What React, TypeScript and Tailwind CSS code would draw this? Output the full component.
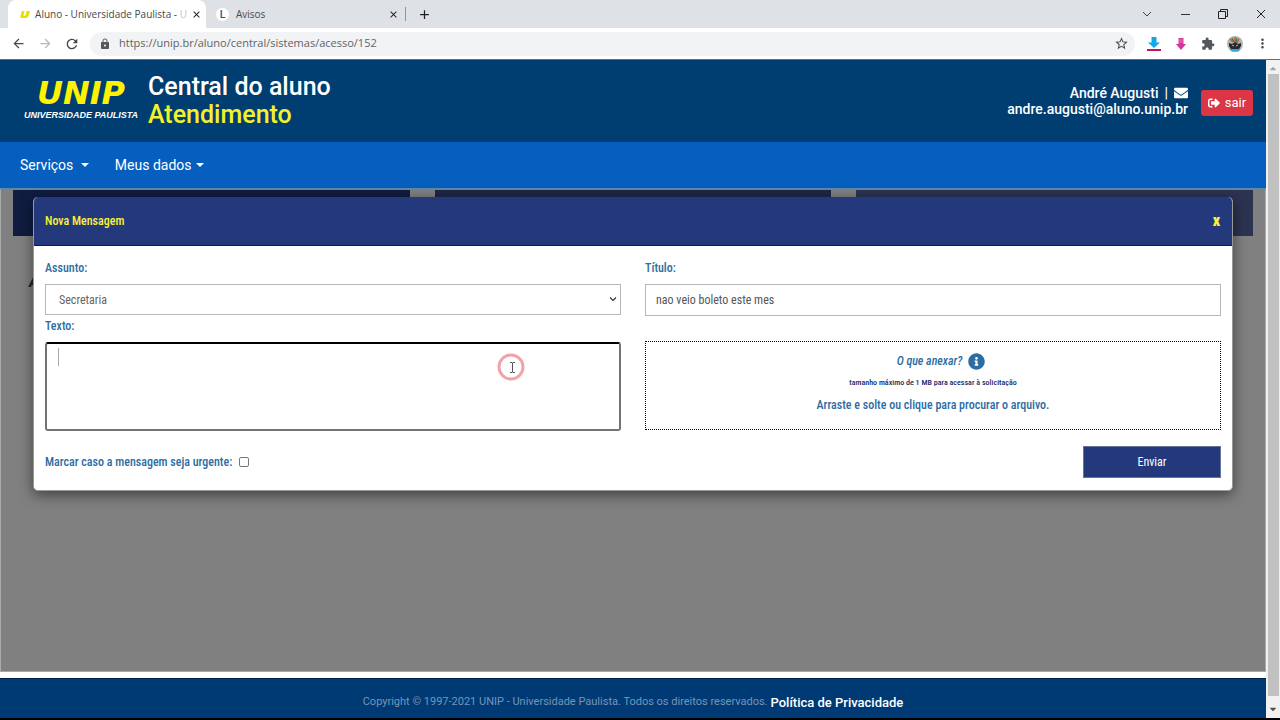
import type { ReactNode } from "react";
import { FaCaretDown, FaEnvelope, FaInfoCircle, FaSignOutAlt } from "react-icons/fa";
import {
  MdArrowBack,
  MdArrowForward,
  MdClose,
  MdExtension,
  MdLock,
  MdMoreVert,
  MdRefresh,
  MdStarBorder,
  MdAdd,
} from "react-icons/md";

function IconButton({ label, children }: { label: string; children: ReactNode }) {
  return (
    <button type="button" aria-label={label} className="flex h-5 w-5 shrink-0 items-center justify-center">
      {children}
    </button>
  );
}

function UnipMark() {
  return (
    <svg viewBox="0 0 12 10" className="h-[9px] w-3 shrink-0" aria-hidden="true">
      <path d="M2.5 1h3L4.3 6.5h2L7.8 1h3.7L9.8 7Q9.3 9 7 9H2.2Q.3 9 .8 7z" fill="#e6e000" />
    </svg>
  );
}

function TabStrip() {
  return (
    <div className="flex h-7 items-stretch bg-[#dee1e6] text-[10px] text-[#45494d]">
      <div className="ml-2 flex w-[198px] items-center justify-between rounded-t-lg bg-white pl-[11px] pr-1">
        <UnipMark />
        <span className="whitespace-nowrap">
          Aluno - Universidade Paulista - <span className="text-[#c4c6c8]">U</span>
        </span>
        <button type="button" aria-label="Fechar aba Aluno">
          <MdClose size={11} color="#202124" />
        </button>
      </div>
      <div className="flex w-[202px] items-center pl-[10px] pr-[5px]">
        <span className="flex h-[13px] w-[13px] items-center justify-center rounded-full bg-white text-[11px] font-semibold text-[#1d5686]">
          L
        </span>
        <span className="ml-[7px] flex-1">Avisos</span>
        <IconButton label="Fechar aba Avisos">
          <MdClose size={11} color="#202124" />
        </IconButton>
      </div>
      <span className="my-[7px] -ml-[3px] w-px bg-[#909498]" />
      <div className="ml-2 flex items-center">
        <IconButton label="Nova aba">
          <MdAdd size={15} color="#202124" />
        </IconButton>
      </div>
      <div className="ml-auto flex items-center gap-[18px] pr-[9px]">
        <IconButton label="Pesquisar abas">
          <svg viewBox="0 0 10 6" className="h-[6px] w-[10px]" fill="none" stroke="#444">
            <path d="M1 1l4 4 4-4" />
          </svg>
        </IconButton>
        <IconButton label="Minimizar">
          <span className="h-px w-[9px] bg-[#333]" />
        </IconButton>
        <IconButton label="Restaurar">
          <svg viewBox="0 0 10 10" className="h-[10px] w-[10px]" fill="none" stroke="#222">
            <path d="M.5 2.5h7v7h-7zM2.5 2.5v-2h7v7h-2" />
          </svg>
        </IconButton>
        <IconButton label="Fechar">
          <svg viewBox="0 0 10 10" className="h-[10px] w-[10px]" fill="none" stroke="#222">
            <path d="M1 1l8 8M9 1L1 9" />
          </svg>
        </IconButton>
      </div>
    </div>
  );
}

function Toolbar() {
  return (
    <div className="flex h-8 items-center border-b border-[#4b7899] bg-white px-2">
      <div className="flex gap-[7px]">
        <IconButton label="Voltar">
          <MdArrowBack size={15} color="#45494d" />
        </IconButton>
        <IconButton label="Avançar">
          <MdArrowForward size={15} color="#b5b8bb" />
        </IconButton>
        <IconButton label="Recarregar">
          <MdRefresh size={16} color="#45494d" />
        </IconButton>
      </div>
      <div className="ml-[8px] flex h-6 flex-1 items-center rounded-full bg-[#f1f3f4] pl-[9px] pr-1">
        <MdLock size={12} color="#55595d" />
        <input
          aria-label="Endereço"
          readOnly
          value="https://unip.br/aluno/central/sistemas/acesso/152"
          className="ml-2 min-w-0 flex-1 bg-transparent text-[11px] text-[#5f6368] outline-none"
        />
        <IconButton label="Favoritar">
          <MdStarBorder size={15} color="#45494d" />
        </IconButton>
      </div>
      <div className="ml-[9px] flex items-center gap-[7px]">
        <IconButton label="Downloads">
          <svg viewBox="0 0 14 14" className="h-[14px] w-[14px]">
            <path d="M4.5 0h5v5.5H13L7 11 1 5.500h3.500z" fill="#10a8e8" />
            <path d="M0 12h14v2H0z" fill="#c2185b" />
          </svg>
        </IconButton>
        <IconButton label="Baixar vídeo">
          <svg viewBox="0 0 10 12" className="h-3 w-[10px]">
            <path d="M2.500 0h5v6H10L5 12 0 6h2.500z" fill="#d9349a" />
            <path d="M2.500 2h5M2.500 4h5" stroke="#f3a6d3" strokeWidth=".6" />
          </svg>
        </IconButton>
        <IconButton label="Extensões">
          <MdExtension size={14} color="#54585c" />
        </IconButton>
        <IconButton label="Perfil">
          <svg viewBox="0 0 16 16" className="h-4 w-4">
            <circle cx="8" cy="8" r="8" fill="#a9b6b4" />
            <path d="M3 3l3 3M8 1v5M12 3l-2 4" stroke="#c55f2e" strokeWidth="1.600" />
            <path d="M5 2l2 4M10 2l-1 5" stroke="#3f7048" strokeWidth="1.200" />
            <path d="M2 7l3 1 3-2 3 2 3-1v3l-2 3H4l-2-3z" fill="#29282a" />
            <path d="M5 9l2 1M11 9l-2 1" stroke="#d4b18d" />
            <path d="M3 13h10v1l-2 1.500H5L3 14z" fill="#35a6df" />
          </svg>
        </IconButton>
        <IconButton label="Menu">
          <MdMoreVert size={15} color="#45494d" />
        </IconButton>
      </div>
    </div>
  );
}

function SiteHeader() {
  return (
    <header className="flex h-[82px] items-center bg-[#003e71] pl-[25px] pr-[13px] text-white">
      <a href="#inicio" className="flex w-28 flex-col items-center">
        <span className="font-['DejaVu_Sans'] text-[32px] font-bold italic leading-6 text-[#fff200]">UNIP</span>
        <span className="mt-1 whitespace-nowrap font-['Liberation_Sans'] text-[9px] font-bold italic leading-3">
          UNIVERSIDADE PAULISTA
        </span>
      </a>
      <h1 className="ml-[11px] text-[25px] font-medium leading-7">
        Central do aluno
        <span className="block text-[#f4f12c]">Atendimento</span>
      </h1>
      <div className="ml-auto text-right text-sm font-medium leading-4">
        <div className="flex items-center justify-end gap-[6px]">
          <span>André Augusti</span>
          <span>|</span>
          <FaEnvelope size={14} />
        </div>
        <div>andre.augusti@aluno.unip.br</div>
      </div>
      <button
        type="button"
        className="ml-[13px] mt-1 flex h-[26px] w-[52px] items-center justify-center gap-[5px] rounded-[3px] bg-[#dc3545] text-[13px]"
      >
        <FaSignOutAlt size={12} />
        sair
      </button>
    </header>
  );
}

function Field({ label, id, children }: { label: string; id: string; children: ReactNode }) {
  return (
    <div>
      <label htmlFor={id} className="block h-[26px] font-medium leading-5 text-[#2d6ca2]">
        {label}
      </label>
      {children}
    </div>
  );
}

function MessageDialog() {
  return (
    <section
      role="dialog"
      aria-labelledby="dialog-title"
      className="absolute inset-x-8 top-[7px] overflow-hidden rounded-[5px] border border-[#999] border-t-0 bg-white font-['Roboto_Condensed',sans-serif] text-[12px] shadow-[0_4px_14px_rgba(0,0,0,0.5)]"
    >
      <header className="flex h-[49px] items-center justify-between border-b border-[#071c55] bg-[#24397b] pl-[11px] pr-3 text-[#fbf136]">
        <h2 id="dialog-title" className="font-medium">
          Nova Mensagem
        </h2>
        <button type="button" aria-label="Fechar" className="text-base font-black">
          x
        </button>
      </header>
      <form className="px-[11px] py-3" onSubmit={(event) => event.preventDefault()}>
        <div className="grid grid-cols-2 gap-x-6">
          <Field label="Assunto:" id="assunto">
            <div className="relative">
              <select
                id="assunto"
                className="block h-[31px] w-full appearance-none border border-[#b5b8ba] bg-white pl-[13px] text-[#666]"
              >
                <option>Secretaria</option>
              </select>
              <svg
                viewBox="0 0 8 5"
                className="pointer-events-none absolute right-1 top-[13px] h-[5px] w-2"
                fill="none"
                stroke="#333"
                strokeWidth="1.200"
              >
                <path d="M1 .5l3 3 3-3" />
              </svg>
            </div>
          </Field>
          <Field label="Título:" id="titulo">
            <input
              id="titulo"
              defaultValue="nao veio boleto este mes"
              className="block h-8 w-full border border-[#b5b8ba] px-[10px] text-[#555]"
            />
          </Field>
          <div className="relative">
            <Field label="Texto:" id="texto">
              <textarea
                id="texto"
                className="block h-[89px] w-full resize-none rounded-[3px] border-2 border-[#737373] border-t-black px-3 py-1"
              />
            </Field>
            <span className="absolute left-[13px] top-8 h-[18px] w-px bg-[#aaa]" />
            <svg viewBox="0 0 28 28" className="absolute left-[452px] top-[37px] h-7 w-7" fill="none">
              <circle cx="14" cy="14" r="12" stroke="#f2a3a6" strokeWidth="3" />
              <path d="M13 9.500h2l.5.500.5-.5h2M13 19.500h2l.5-.5.5.5h2M15.500 10v9" stroke="#555" />
            </svg>
          </div>
          <div className="pt-[25px]">
            <button
              type="button"
              className="flex h-[89px] w-full flex-col items-center border border-dotted border-black pt-[9px] font-medium text-[#2d6ca2]"
            >
              <span className="flex h-5 items-center gap-[6px] pl-4 italic">
                O que anexar?
                <FaInfoCircle size={17} />
              </span>
              <span className="mt-1 text-[8px] leading-4 text-[#182a66]">
                tamanho máximo de 1 MB para acessar à solicitação
              </span>
              <span className="mt-1 leading-5">Arraste e solte ou clique para procurar o arquivo.</span>
            </button>
          </div>
        </div>
        <div className="mt-[15px] flex items-center justify-between">
          <label className="flex items-center gap-[7px] font-medium text-[#2d6ca2]">
            Marcar caso a mensagem seja urgente:
            <input
              type="checkbox"
              className="h-[10px] w-[10px] appearance-none rounded-[2px] border border-[#767676] bg-white"
            />
          </label>
          <button type="submit" className="h-8 w-[138px] border border-[#65749f] bg-[#24397b] text-white">
            Enviar
          </button>
        </div>
      </form>
    </section>
  );
}

function NavMenu({ children }: { children: ReactNode }) {
  return (
    <button type="button" className="flex items-center gap-1">
      {children}
      <span className="border-x-4 border-t-4 border-x-transparent border-t-white" />
    </button>
  );
}

export default function App() {
  return (
    <div className="flex min-h-screen flex-col border-b-2 border-black bg-white font-['Open_Sans',sans-serif]">
      <TabStrip />
      <Toolbar />
      <div className="flex flex-1">
        <div className="flex min-w-0 flex-1 flex-col font-[Roboto,sans-serif]">
          <SiteHeader />
          <nav className="flex h-[47px] items-center gap-[26px] border-b border-[#5e87a8] bg-[#065fbf] pl-5 text-sm text-white">
            <NavMenu>Serviços&nbsp;</NavMenu>
            <NavMenu>Meus dados</NavMenu>
          </nav>
          <main className="relative flex-1 border border-[#aaa] border-t-[#808080] bg-[#808080]">
            <div className="grid grid-cols-3 gap-[25px] px-3">
              <div className="h-[46px] bg-[#101c40]" />
              <div className="h-[46px] bg-[#1d2646]" />
              <div className="h-[46px] bg-[#2c3350]" />
            </div>
            <p className="ml-7 mt-9 text-base font-bold italic leading-5 text-[#222]">A</p>
            <MessageDialog />
          </main>
          <footer className="mt-[6px] flex h-10 items-center justify-center gap-[3px] border-t border-[#00204d] bg-[#003a75] pt-2 text-[#7396b8]">
            <span className="text-[11px]">
              Copyright © 1997-2021 UNIP - Universidade Paulista. Todos os direitos reservados.
            </span>
            <a href="#privacidade" className="text-[13px] font-medium text-white">
              Política de Privacidade
            </a>
          </footer>
        </div>
        <div className="flex w-[14px] flex-col items-center bg-[#f1f1f1] py-1 text-[#505050]" aria-hidden="true">
          <FaCaretDown size={10} className="rotate-180 text-[#a3a3a3]" />
          <span className="w-[11px] flex-1 bg-[#c1c1c1]" />
          <FaCaretDown size={10} className="mt-2" />
        </div>
      </div>
    </div>
  );
}
